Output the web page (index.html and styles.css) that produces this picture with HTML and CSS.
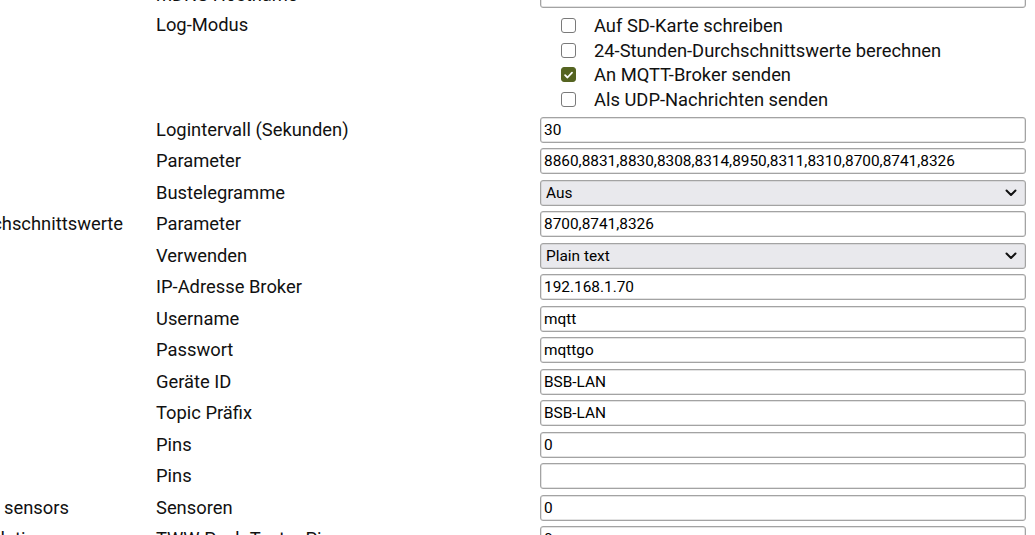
FILE: index.html
```html
<!DOCTYPE html>
<html lang="de">
<head>
<meta charset="utf-8">
<title>BSB-LAN Einstellungen</title>
<link rel="stylesheet" href="styles.css">
</head>
<body>
<div class="page">
  <div class="settings">
    <div class="cat"></div>
    <div class="lbl">mDNS Hostname</div>
    <div class="val"><div class="field">BSB-LAN</div></div>

    <div class="cat top"></div>
    <div class="lbl top">Log-Modus</div>
    <div class="val">
      <ul class="checks">
        <li><span class="box"></span>Auf SD-Karte schreiben</li>
        <li><span class="box"></span>24-Stunden-Durchschnittswerte berechnen</li>
        <li><span class="box on"><svg viewBox="0 0 14 14" width="14" height="14"><path d="M3.3 7.2 L5.9 9.7 L10.8 4.4" fill="none" stroke="#fff" stroke-width="1.9" stroke-linecap="round" stroke-linejoin="round"/></svg></span>An MQTT-Broker senden</li>
        <li><span class="box"></span>Als UDP-Nachrichten senden</li>
      </ul>
    </div>

    <div class="cat"></div>
    <div class="lbl">Logintervall (Sekunden)</div>
    <div class="val"><div class="field">30</div></div>

    <div class="cat"></div>
    <div class="lbl">Parameter</div>
    <div class="val"><div class="field">8860,8831,8830,8308,8314,8950,8311,8310,8700,8741,8326</div></div>

    <div class="cat"></div>
    <div class="lbl">Bustelegramme</div>
    <div class="val"><div class="field select">Aus<svg class="chev" viewBox="0 0 12 8" width="12" height="8"><path d="M1.5 1.5 L6 6 L10.5 1.5" fill="none" stroke="#111" stroke-width="2" stroke-linecap="round" stroke-linejoin="round"/></svg></div></div>

    <div class="cat">Durchschnittswerte</div>
    <div class="lbl">Parameter</div>
    <div class="val"><div class="field">8700,8741,8326</div></div>

    <div class="cat"></div>
    <div class="lbl">Verwenden</div>
    <div class="val"><div class="field select">Plain text<svg class="chev" viewBox="0 0 12 8" width="12" height="8"><path d="M1.5 1.5 L6 6 L10.5 1.5" fill="none" stroke="#111" stroke-width="2" stroke-linecap="round" stroke-linejoin="round"/></svg></div></div>

    <div class="cat"></div>
    <div class="lbl">IP-Adresse Broker</div>
    <div class="val"><div class="field">192.168.1.70</div></div>

    <div class="cat"></div>
    <div class="lbl">Username</div>
    <div class="val"><div class="field">mqtt</div></div>

    <div class="cat"></div>
    <div class="lbl">Passwort</div>
    <div class="val"><div class="field">mqttgo</div></div>

    <div class="cat"></div>
    <div class="lbl">Geräte ID</div>
    <div class="val"><div class="field">BSB-LAN</div></div>

    <div class="cat"></div>
    <div class="lbl">Topic Präfix</div>
    <div class="val"><div class="field">BSB-LAN</div></div>

    <div class="cat"></div>
    <div class="lbl">Pins</div>
    <div class="val"><div class="field">0</div></div>

    <div class="cat"></div>
    <div class="lbl">Pins</div>
    <div class="val"><div class="field"></div></div>

    <div class="cat">DHT sensors</div>
    <div class="lbl">Sensoren</div>
    <div class="val"><div class="field">0</div></div>

    <div class="cat">Emulation</div>
    <div class="lbl">TWW Push Taster Pin</div>
    <div class="val"><div class="field">0</div></div>
  </div>
</div>
</body>
</html>
```

FILE: styles.css
```css
html, body {
  margin: 0;
  padding: 0;
  background: #fff;
  overflow: hidden;
}
body {
  width: 1035px;
  height: 535px;
  font-family: Roboto, "Liberation Sans", Arial, sans-serif;
  color: #111;
}
.page {
  margin-top: -21px;
  margin-left: -36px;
}
.settings {
  display: grid;
  grid-template-columns: 192px 384px 486px;
  font-size: 18.35px;
}
.cat, .lbl {
  display: flex;
  align-items: center;
  padding: 2.75px 0;
  white-space: nowrap;
  line-height: 24.5px;
}
.cat.top, .lbl.top {
  align-items: flex-start;
}
.val {
  padding: 2.75px 0;
}
.field {
  box-sizing: border-box;
  height: 26px;
  border: 1px solid #a3a3a3;
  border-radius: 3px;
  box-shadow: inset 0 0 0 0.5px #c8c8c8;
  padding: 0 3px;
  display: flex;
  align-items: center;
  font-family: Roboto, "Liberation Sans", sans-serif;
  font-size: 15.4px;
  color: #000;
  background: #fff;
  white-space: nowrap;
  overflow: hidden;
}
.field.select {
  background: #e9e9ed;
  padding-left: 5px;
  justify-content: space-between;
  padding-right: 8px;
}
.chev {
  flex: none;
}
.checks {
  list-style: none;
  margin: 0;
  padding: 0 0 0 21px;
}
.checks li {
  display: flex;
  align-items: center;
  height: 24.5px;
  font-size: 18.35px;
  color: #111;
}
.box {
  box-sizing: border-box;
  width: 15px;
  height: 15px;
  border: 1.5px solid #7a7a7a;
  border-radius: 3px;
  margin-right: 18px;
  display: flex;
  align-items: center;
  justify-content: center;
  flex: none;
}
.box.on {
  background: #556421;
  border-color: #556421;
}
.box svg {
  display: block;
}
```
